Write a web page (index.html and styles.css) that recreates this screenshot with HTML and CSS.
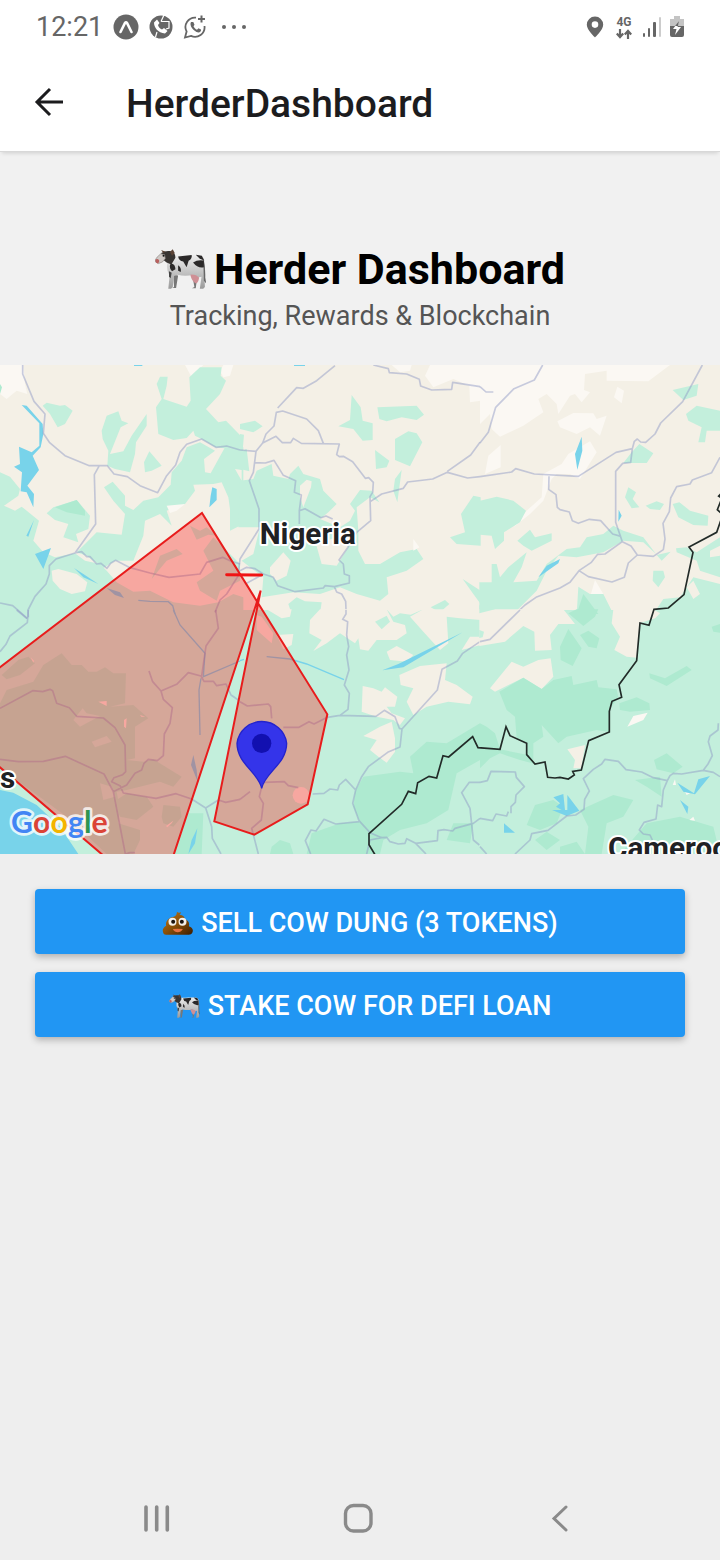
FILE: index.html
```html
<!DOCTYPE html>
<html lang="en">

<head>
    <meta charset="UTF-8" />
    <title>HerderDashboard</title>
    <meta name="viewport" content="width=device-width, initial-scale=1.0" />
    <link rel="stylesheet" href="styles.css">
</head>

<body>

    <!-- Shared icons -->
    <svg class="defs" width="0" height="0" aria-hidden="true">
        <defs>
            <linearGradient id="hide" x1="0" y1="0" x2="0" y2="1">
                <stop offset="0" stop-color="#eee" />
                <stop offset="1" stop-color="#9a9a9a" />
            </linearGradient>
            <linearGradient id="dungFill" x1="0" y1="0" x2="1" y2="1">
                <stop offset="0" stop-color="#b9781c" />
                <stop offset="0.5" stop-color="#8a5008" />
                <stop offset="1" stop-color="#3c1c00" />
            </linearGradient>
            <symbol id="cow" viewBox="0 0 150 118">
                <path d="M110 78 116 112 109 116 120 116 124 84zM54 76 56 112 51 115 62 115 68 78z" fill="#777" />
                <path d="M34 18C60 21 120 14 138 20Q150 28 145 66L147 112 142 117 132 117 137 82Q122 86 112 76 90 82 66 76L56 80 52 113 47 117 39 117 43 78Q32 60 36 40z" fill="url(#hide)" />
                <path d="M104 76Q118 72 130 84 128 98 121 102 108 96 104 76z" fill="#cf8f95" />
                <path d="M142 26Q149 50 148 84L151 102 144 94z" fill="#666" />
                <path d="M18 12Q30 4 44 6 60 8 60 26L48 46 34 40 22 30z" fill="#383432" />
                <path d="M17 14 28 17 30 28 22 38 10 43 1 38Q0 30 6 24z" fill="#cfc9c6" stroke="#8f8986" stroke-width="2" />
                <path d="M1 32Q6 26 12 33 14 39 8 43 1 42 1 32z" fill="#b8605e" />
                <path d="M24 12 18 3 31 8M44 9 52 1 58 12 50 20z" fill="#5b4336" />
                <circle cx="25" cy="20" r="3" fill="#111" />
                <path d="M68 22 108 18Q110 29 99 35L93 54 83 37Q70 35 68 22zM112 40Q126 30 144 34L144 54Q126 58 112 40zM46 42Q60 44 60 60L50 66Q40 56 46 42zM68 48Q78 54 76 68L68 64zM120 17 138 20 145 34 132 29z" fill="#2b2929" />
                <path d="M41 66 49 70 46 86 41 82z" fill="#444" />
            </symbol>
            <symbol id="dung" viewBox="0 0 92 72">
                <path d="M5 69Q-4 54 12 44 8 28 28 19 46 16 44 2 52 8 56 2 56 9 52 11 68 13 68 25 84 30 80 46 97 52 90 66 88 71 80 71L12 71Q7 71 5 69z" fill="url(#dungFill)" />
                <circle cx="31" cy="32" r="12" fill="#f4f0ea" />
                <circle cx="61" cy="32" r="12" fill="#f4f0ea" />
                <circle cx="33" cy="32" r="6" fill="#1a1410" />
                <circle cx="59" cy="32" r="6" fill="#1a1410" />
                <path d="M32 54Q46 52 62 54 56 64 47 64 37 64 32 54z" fill="#e5713f" />
            </symbol>
        </defs>
    </svg>

    <!-- Phone status bar -->
    <div class="status-bar">
        <div class="status-group">
            <span class="clock">12:21</span>
            <svg width="26" height="26" viewBox="0 0 26 26">
                <circle cx="13" cy="13" r="12.5" fill="#666" />
                <path d="M7.5 18 12 9q1-1.6 2 0l4.500 9" fill="none" stroke="#fff" stroke-width="2.600" stroke-linecap="round" />
            </svg>
            <svg width="24" height="26" viewBox="0 0 24 26">
                <circle cx="12" cy="13" r="11.500" fill="#666" />
                <path d="M5 8.500c0 5 4 10.500 11 11l2.500-2.500-3.500-3-2 1.500c-2-1-3.500-2.500-4-4.500l1.500-2L8 5.500z" fill="#fff" />
                <path d="M12 7.500h8v6.500l-3 1M15 1 12 7.500M8 18 6.500 23" fill="none" stroke="#fff" stroke-width="1.200" />
            </svg>
            <svg width="24" height="26" viewBox="0 0 24 26">
                <path d="M13 3.600A9.500 9.500 0 0 0 3.600 17.500L2 23.500l6-1.600A9.600 9.600 0 0 0 21.500 12" fill="none" stroke="#666" stroke-width="1.800" />
                <path d="M8 8c-2 3 2 9.500 7.500 10.500 1.500 0 3-1.500 2.500-3l-2.500-1.200-1.500 1.500c-1.500-.6-3-2-3.500-3.500l1-1.500L10.300 8z" fill="#666" />
                <path d="M18.500 1.500v7M15 5h7" stroke="#666" stroke-width="2" />
            </svg>
            <svg class="more-icon" width="26" height="26" viewBox="0 0 26 26" fill="#666">
                <circle cx="3" cy="13" r="2" />
                <circle cx="13" cy="13" r="2" />
                <circle cx="23" cy="13" r="2" />
            </svg>
        </div>
        <div class="status-group status-right">
            <svg width="20" height="24" viewBox="0 0 20 24">
                <path fill-rule="evenodd" d="M9 1.500a8.200 8.200 0 0 0-8.200 8.300C.8 15 9 22.500 9 22.500s8.200-7.500 8.200-12.700A8.200 8.200 0 0 0 9 1.500zm0 4.800a3.300 3.300 0 1 1 0 6.600 3.300 3.300 0 0 1 0-6.600z" fill="#666" />
            </svg>
            <div class="network">
                <span>4G</span>
                <svg width="16" height="10" viewBox="0 0 16 10" fill="none" stroke="#666" stroke-width="2.200">
                    <path d="M4 0v8M.8 4.500 4 8 7.200 4.500M12 10V2M8.800 5.500 12 2 15.200 5.500" />
                </svg>
            </div>
            <svg width="20" height="24" viewBox="0 0 20 24" fill="#666">
                <rect x="1" y="18" width="2" height="4" rx="1" />
                <rect x="6" y="13" width="2" height="9" rx="1" />
                <rect x="11" y="7" width="3" height="15" rx="1" />
                <rect x="17" y="2" width="2" height="20" rx="1" fill="#ccc" />
            </svg>
            <svg width="16" height="24" viewBox="0 0 16 24">
                <path d="M5 1h6v3h4v8H1V4h4z" fill="#c4c4c4" />
                <path d="M1 11h14v9q0 2-2 2H3q-2 0-2-2z" fill="#666" />
                <path d="M10 6 4 14h3.500L6 20l6-8H8.500z" fill="#fff" />
                <path d="M10 6 6 11h3z" fill="#666" />
            </svg>
        </div>
    </div>

    <header class="app-bar">
        <button class="back-btn" aria-label="Back">
            <svg width="30" height="30" viewBox="0 0 30 30" fill="none" stroke="#1c1c1e" stroke-width="3">
                <path d="M29 13H3M16 0 3 13l13 13" />
            </svg>
        </button>
        <div class="app-title">HerderDashboard</div>
    </header>

    <main>
        <div class="intro">
            <h1>
                <svg class="title-cow" role="img" aria-label="Cow"><use href="#cow" /></svg>
                Herder Dashboard
            </h1>
            <p>Tracking, Rewards &amp; Blockchain</p>
        </div>

        <svg class="map" viewBox="0 3 2160 1467" preserveAspectRatio="xMidYMid slice" role="img" aria-label="Map of Nigeria">
            <rect class="land" width="2160" height="740" />
            <rect class="green" y="738" width="2160" height="740" />

            <!-- north west -->
            <g>
                <path class="sand" d="M0 3 70 3 75 60 82 90 50 80 20 105 0 90zM555 3 610 3 575 40zM670 3 700 3 690 35 670 40 660 20z" />
                <path class="green" d="M0 325 30 338 60 375 55 395 12 425 45 440 65 428 117 470 100 530 130 565 165 580 225 568 255 590 300 600 320 620 350 655 400 683 450 680 520 715 600 725 655 715 700 690 730 700 730 750 0 750z" />
                <path class="green" d="M312 370 338 353 375 395 375 425 400 438 430 410 475 400 512 362 515 325 545 290 560 250 600 235 645 260 612 285 615 325 632 328 675 250 730 250 730 480 690 500 690 435 685 400 665 355 640 360 580 362 585 380 555 420 500 440 515 485 480 450 435 470 430 515 400 590 345 590 310 612 260 575 230 565 270 525 290 505 365 512 375 450 340 410z" />
                <path class="green" d="M470 60 480 38 503 38 500 65 490 105 560 128 572 110 568 40 600 10 665 10 662 35 678 50 660 90 618 135 655 175 678 170 722 215 722 258 645 250 605 225 585 215 580 200 560 222 520 228 475 210 468 130 485 105z" />
                <path class="green" d="M128 125 140 116 180 125 195 123 218 140 195 180 173 190 150 150zM305 200 320 155 355 142 365 170 385 178 362 190 330 270 370 262 395 215 440 150 440 185 408 235 405 270 390 325 345 315 322 305 325 260 308 225zM432 295 448 262 485 305 455 320 435 325zM140 448 160 430 230 408 270 455 265 495 228 510 235 535 190 520 205 480 165 468z" />
                <path class="green" d="M570 485 600 500 620 490 650 515 625 512 590 527zM455 645 480 575 530 555 548 570 500 590 475 620zM610 560 640 520 720 600 720 650 660 680 650 710 600 680 590 655 640 620z" />
                <path class="forest" d="M165 430 230 408 255 440 255 455 200 445zM0 60 6 70 0 90z" />
                <path class="land" d="M155 620 175 615 230 630 262 655 255 682 215 690 180 675 158 650zM705 315 725 318 725 350z" />
                <path class="sand" d="M500 425 555 420 530 440 510 447z" />
                <path class="water" d="M65 123 80 125 128 180 130 210 122 250 98 275 117 318 82 365 102 390 100 430 80 385 62 382 66 325 42 308 60 300 57 248 95 265 118 245 118 178zM102 468 85 518 79 515zM105 570 153 552 130 615zM222 612 250 630 295 660 250 640zM632 395 637 370 650 375 650 408 628 430zM320 672 360 685 372 702 345 693zM402 3 427 3 427 6 402 6z" />
                <path class="river" d="M415 709 450 712 505 713 518 725 525 750" />
                <path class="road" d="M68 3 68 30 102 112 135 150 130 208 148 235 195 275 268 305 322 305 342 330 382 338 420 365 473 386 500 335 527 303 540 265 560 241 605 225 648 250 680 246 720 258M298 305 283 332 287 480 225 567 168 585 148 605 148 630 138 660 105 697 84 738 85 760M225 567 245 563 260 578 270 578 290 600 303 598 321 613 332 598 347 589 390 611 450 627 507 640 600 630 620 595 668 580 690 590 720 600M0 717 38 725 82 763M715 635 680 690 660 708 645 745" />
            </g>

            <!-- north centre -->
            <g transform="translate(720 0)">
                <path class="sand" d="M570 3 722 3 722 110 690 115 688 65 640 45 580 70 555 35zM455 3 515 3 510 20 480 25z" />
                <path class="green" d="M0 180 45 170 68 187 40 205 0 195zM335 93 362 130 368 170 398 178 398 228 368 230 340 195 295 187 330 168zM412 130 530 125 552 152 530 168 485 160 440 172 418 165zM465 225 505 202 530 208 547 235 510 307 465 288zM405 258 448 290 440 310 408 315zM0 210 12 212 8 260 20 255 28 322 0 315zM465 345 485 318 472 415 460 380z" />
                <path class="green" d="M0 350 40 345 50 320 95 300 100 335 145 345 150 330 175 305 190 330 240 345 250 380 290 420 265 445 240 465 300 490 330 470 345 440 330 420 360 378 395 380 418 415 390 400 350 430 355 500 355 560 375 600 420 600 480 565 530 555 550 585 500 620 440 640 445 690 420 710 350 690 300 670 240 690 160 685 65 700 70 640 5 590 40 570 60 490 -5 490z" />
                <path class="green" d="M145 720 170 700 195 712 245 715 240 750 155 750zM668 645 722 680 722 720 700 690 675 655zM572 730 615 708 628 720 600 745zM630 520 675 505 663 450 700 395 722 400 722 545 650 540z" />
                <path class="land" d="M180 365 200 347 215 352 213 370 190 430 180 400zM90 610 130 565 152 590 140 635 110 650 90 630zM228 540 290 520 325 550 290 605 245 600z" />
                <path class="sand" d="M520 525 538 550 520 560z" />
                <path class="water" d="M162 3h33v3h-33z" />
                <path class="road" d="M285 5 230 50 190 73 170 71 113 132M400 3 445 14 448 26 500 30 538 46 542 66 575 78 635 76 638 55 720 68M68 237 78 210 102 186 109 145 128 141 200 165 235 200 250 238M0 258 48 262 68 237 108 217 127 236 152 236 160 223 184 238 298 240 290 272 298 278 310 277 338 293 376 343 386 341 400 355 398 385 390 398 392 470 350 505 325 548 297 588 310 600 313 630 328 635 328 657 283 668 255 665 250 672 165 683 113 665 100 640 70 630 45 614 20 610 0 620M48 262 40 325 28 350 57 435 57 495 0 585 -5 630M42 296 76 297 102 289 130 334 167 350 163 385 184 393 178 440 178 480M178 440 195 434 243 461 258 456 278 465M392 412 425 390 490 373 503 354 578 345 622 325 683 342 720 338M622 322 692 273 720 235M283 668 290 684 305 690 317 712 318 738M70 630 20 658" />
            </g>

            <!-- north east -->
            <g transform="translate(1440 0)">
                <path class="sand" d="M0 3 570 3 505 52 380 50 380 20 315 30 312 78 330 85 305 115 285 90 270 95 235 150 230 120 200 90 175 105 190 145 130 185 60 218 35 195 30 150 0 180zM232 172 280 147 340 148 350 165 380 155 360 215 330 190 290 210 240 190zM402 100 412 68 432 80 425 118zM15 330 25 275 62 243 62 310zM190 330 245 300 265 270 330 232 350 265 300 345 270 330 230 330 215 345 190 410 150 450 100 490 140 440 185 400zM330 700 345 648 370 690z" />
                <path class="green" d="M578 78 655 60 650 95 610 108zM618 150 650 125 720 140 720 200 680 200 675 235 655 235 665 190 625 170zM455 265 478 240 520 268 500 297 430 297zM435 400 445 370 468 385 458 405 478 430 455 433zM497 425 530 412 552 420 540 438 510 435zM578 420 598 415 630 440 685 455 683 485 640 483 595 460z" />
                <path class="green" d="M0 410 50 398 100 410 138 440 120 475 72 505 72 530 45 555 35 515 0 512zM112 530 150 497 165 520 215 508 215 530 155 560 130 545zM-2 655 35 655 35 600 50 600 60 640 85 610 140 565 125 610 100 655 170 650 200 600 260 555 300 550 320 520 370 510 400 485 430 500 490 520 528 570 490 535 430 530 370 565 290 580 235 575 200 620 170 680 130 720 100 750 -2 750zM530 573 572 563 545 590zM520 620 550 620 555 640 535 670 518 650zM588 553 620 550 650 565 720 520 720 640 660 620 650 590 590 565zM290 750 295 668 330 690 370 690 400 750zM550 705 600 700 640 640 720 660 720 750 520 750z" />
                <path class="forest" d="M290 750 310 690 355 750z" />
                <path class="land" d="M620 670 640 650 660 690 640 705zM690 560 720 545 720 575 690 580z" />
                <path class="water" d="M305 218 307 260 292 317 285 270zM415 473 416 437 425 455zM175 640 200 605 240 585 235 598z" />
                <path class="road" d="M188 3 163 48 102 74 47 130 25 205 0 237M0 68 18 84 40 84M0 338 95 324 107 314 163 330 295 337 408 265 457 254M667 3 608 113 542 177 525 210 497 235 482 234 472 225 463 232 457 254 452 295 428 298 407 322 407 475 427 533 375 570 353 571 333 596 297 620 270 655 240 672 168 700 135 723 119 738M207 337 206 376 228 392 232 430 240 437 268 444 277 470 295 478 328 466 362 470 398 510 423 517M427 533 453 546 472 573 520 577 550 557 555 525 549 478 568 443 572 402 590 368 630 360 637 348 695 326 720 280M472 573 445 597 433 640 396 654 325 638 297 620" />
            </g>

            <!-- south west -->
            <g transform="translate(0 738)">
                <path class="forest" d="M0 280 20 240 100 215 130 165 185 130 215 165 245 165 265 185 290 185 315 172 340 190 378 190 375 280 330 290 400 285 445 325 405 350 405 445 380 450 430 455 460 448 545 500 520 530 480 515 380 540 350 545 360 600 355 640 420 660 420 690 400 732 320 732 200 620 50 510 0 480zM5 195 55 150 85 140 105 160 60 195 20 208zM485 620 490 585 540 590 545 620 520 650 490 640zM350 570 380 550 440 560 460 590 410 630 360 620zM520 732 560 610 610 610 605 732z" />
                <path class="green" d="M220 330 248 295 260 310 300 318 240 350zM275 395 320 378 335 395 285 412zM300 520 335 530 345 560 310 570z" />
                <path class="land" d="M295 275 320 273 320 288zM372 330 380 325 378 355 372 350zM92 142 102 152 100 158zM420 315 436 320 424 320zM498 648 520 632 515 640 502 652z" />
                <path class="water" d="M0 540 40 548 110 585 180 650 235 732 0 732zM565 732 575 690 592 655 585 700zM580 435 590 480 593 515 573 465z" />
                <path class="river" d="M520 0 540 45 615 130 610 200 720 153M603 205 597 240 600 375" />
                <path class="road" d="M0 295 98 242 128 245 150 238 158 242 170 280 208 293 230 319 310 324 345 353 375 405 377 485 368 494 342 503 335 515 360 527 370 549 468 565 528 551 575 567 617 594 655 570 677 577 720 568M0 448 55 455 130 454 196 439 312 492 340 545 376 732M340 545 380 525 405 490 425 480 432 460 445 448 472 452 490 437 493 372 510 340 517 293 490 268 483 243 458 215 447 183M483 243 530 223 565 188 603 198 612 214 640 214 650 227 678 222 693 255 715 270M647 0 655 55 618 108 605 198M617 594 635 650 637 685 663 732M0 125 18 103 30 78 82 38 85 0M50 0 80 25M376 732 390 728 405 728" />
            </g>

            <!-- south centre -->
            <g transform="translate(720 738)">
                <path class="land" d="M240 -2 210 30 208 70 245 90 220 123 260 100 300 70 345 100 355 85 360 118 385 122 410 90 470 90 500 70 495 45 460 35 440 -2zM510 20 550 -2 722 -2 722 30 660 25 620 20 625 100 600 120 550 65zM440 125 470 108 520 135 500 155 450 150zM478 195 540 168 620 160 615 210 650 225 698 260 690 283 625 275 560 290 520 315 500 275 520 235 482 225zM368 228 400 235 425 245 435 232 472 260 465 290 440 290 455 310 495 325 480 345 460 330 410 320 365 305zM370 378 420 350 455 335 465 385 465 425 440 458 415 440 390 420 410 390zM665 120 690 80 722 80 722 105zM110 75 160 72 155 105 130 118zM50 15 65 20 100 70 95 100 50 60zM80 -2 155 -2 150 20 125 25 100 10zM440 -2 550 -2 512 14 480 10 460 20z" />
                <circle class="land" cx="183" cy="556" r="25" />
                <path class="green" d="M405 35 440 17 450 35 425 58z" />
                <path class="forest" d="M345 545 370 500 480 485 520 490 510 440 560 395 620 400 720 340 720 450 650 490 625 600 560 640 480 660 430 690 420 732 200 732 215 670 300 640 360 635 340 590zM640 640 700 640 690 700 620 690zM95 710 120 690 150 700 160 732 90 732z" />
                <path class="green" d="M500 732 560 700 620 732z" />
                <path class="water" d="M427 181 475 162 668 67 490 172z" />
                <path class="river" d="M0 152 12 148M80 140 150 147 200 162 312 209" />
                <path class="road" d="M318 0 318 12 308 28 323 35 320 75 326 110 320 135 327 180 313 225 328 250 324 298 300 316 262 322 222 342 207 335 177 352 130 352M300 316 408 319 433 301 465 320 478 355 486 357 592 240 606 178 652 153 668 130 720 95M486 357 480 411 443 427 385 470 365 500 347 540 338 580 357 632 390 668 425 683M0 275 22 288 85 282 92 290 95 325M218 552 252 550 270 537 293 540 298 525 317 508 347 540M357 635 287 642 252 628 228 663 213 660 196 692 212 732M390 690 425 683 440 682 450 695 475 702 495 700 500 686 527 700 592 692 594 662 612 659 638 663 645 655 700 640 720 625M527 700 558 732M70 517 133 515 145 527 175 533M65 530 58 560 70 580 64 630 35 655 55 732M380 732 390 690M720 517 688 517 665 548 690 595 700 690 718 705M0 568 30 545" />
            </g>

            <!-- south east -->
            <g transform="translate(1440 738)">
                <path class="land" d="M-2 -2 250 -2 285 42 235 42 210 75 215 120 165 122 163 65 130 48 75 95 -2 108zM30 235 95 155 130 170 175 150 212 145 220 200 185 237 130 203 45 245zM400 -2 520 -2 540 10 525 25 480 39 470 143 440 140 403 120 420 80 395 40zM262 418 315 405 304 475 280 475 285 450z" />
                <path class="forest" d="M58 245 130 203 185 237 220 210 275 198 280 225 350 210 355 232 410 238 415 262 388 300 388 366 350 360 260 380 235 400 185 345 190 380 160 400 160 450 140 434 140 400 110 385 105 320 80 300zM240 110 265 57 305 115 278 168 242 150zM265 10 290 -2 355 -2 345 20 310 48zM300 75 325 62 358 85 350 115 325 110zM508 190 555 205 620 168 635 180 560 228 510 205zM418 280 470 262 508 280 510 300 450 305 420 300zM522 450 560 430 608 470 580 490 530 478zM315 732 325 650 300 600 400 555 460 570 430 620 380 640 365 732zM0 340 20 350 45 370 60 418 140 434 165 462 120 450 60 430 30 445 0 475zM165 585 220 570 250 590 230 640 180 660 140 645zM465 510 540 500 545 560 500 530zM500 640 600 620 700 650 720 732 420 732zM240 710 290 695 315 732 240 732zM165 690 200 665 240 690 200 720zM695 50 720 42 720 68 700 65z" />
                <path class="green" d="M-2 60 12 65 8 82 -2 84zM-2 -14 20 -14 45 -2 -2 10z" />
                <path class="sand" d="M442 350 460 318 503 308 490 330zM578 525 585 508 588 525zM615 545 630 550 620 555zM628 630 640 620 645 632z" />
                <path class="water" d="M216 600 245 600 228 590 240 580 220 562 250 552 255 600 262 600 262 555 298 602 260 618zM72 640 105 668 72 668zM592 518 642 550 655 508 690 498 645 553 610 545zM600 570 625 590 622 612z" />
                <path class="road" d="M120 0 30 88 0 95M0 517 22 512 33 484 106 486 109 502 133 530 108 555 106 577 93 590 93 610M0 625 38 632 48 612 80 618 85 605M105 732 150 690 155 671 204 661 260 618 287 615 312 598 314 568 328 543 310 506 340 478 365 462 375 448 415 454 438 479 485 486 520 503 562 512 550 540 545 590 533 585 528 627 492 637 478 660 490 672 510 675 517 690M562 512 570 497 580 490 605 492 670 481 700 487 720 500M670 481 684 462 697 437 685 395 690 378 714 360 715 340M0 710 20 732" />
            </g>

            <!-- country border -->
            <path class="border" d="M1125 1472 1107 1442 1107 1409 1205 1321 1225 1282 1247 1289 1253 1256 1287 1237 1310 1242 1329 1175 1346 1179 1418 1118 1434 1151 1500 1156 1518 1088 1530 1115 1580 1138 1580 1172 1605 1200 1635 1194 1643 1240 1665 1242 1680 1240 1705 1245 1723 1233 1718 1222 1744 1218 1766 1130 1828 1104 1828 1042 1836 1012 1865 1000 1857 962 1910 890 1920 777 1947 784 1962 736 2005 732 2052 692 2079 565 2067 549 2150 505 2162 470M2162 446 2152 437 2162 412M2165 402 2156 396 2162 390" />

            <!-- grazing fence -->
            <path class="fence" d="M606 447 982 1051 923 1321 763 1412 643 1372 782 680 502 1530 375 1530 -20 1193 -20 925z" />
            <path class="track" d="M680 632 785 633" />

            <text class="place" x="779" y="540">Nigeria</text>
            <text class="place" x="1824" y="1482">Cameroon</text>
            <text class="place" x="0" y="1273">s</text>

            <!-- cow position -->
            <path class="pin" d="M785 1273C775 1225 711 1200 711 1138a75 74 0 0 1 149 0C860 1200 795 1225 785 1273z" />
            <circle class="pin-dot" cx="785" cy="1138" r="29" />

            <text class="google" x="33" y="1407"><tspan fill="#4285f4">G</tspan><tspan fill="#db4437">o</tspan><tspan fill="#f4b400">o</tspan><tspan fill="#4285f4">g</tspan><tspan fill="#2f9550">l</tspan><tspan fill="#db4437">e</tspan></text>
        </svg>

        <div class="actions">
            <button class="action-btn">
                <svg class="dung-icon" role="img" aria-label="Dung"><use href="#dung" /></svg>
                SELL COW DUNG (3 TOKENS)
            </button>
            <button class="action-btn">
                <svg class="cow-icon" role="img" aria-label="Cow"><use href="#cow" /></svg>
                STAKE COW FOR DEFI LOAN
            </button>
        </div>
    </main>

    <!-- Phone navigation -->
    <nav class="nav-bar">
        <button aria-label="Recent apps">
            <svg width="32" height="32" viewBox="0 0 32 32" fill="none" stroke="#8a8a8a" stroke-width="3.600" stroke-linecap="round">
                <path d="M5 5v23M15.700 5v23M26.300 5v23" />
            </svg>
        </button>
        <button aria-label="Home">
            <svg width="32" height="32" viewBox="0 0 32 32" fill="none" stroke="#8a8a8a" stroke-width="3.400">
                <rect x="3.500" y="3.500" width="25.500" height="25.500" rx="8" />
            </svg>
        </button>
        <button aria-label="Back">
            <svg width="32" height="32" viewBox="0 0 32 32" fill="none" stroke="#8a8a8a" stroke-width="3" stroke-linecap="round">
                <path d="M23 5 11 16.500 23 28" />
            </svg>
        </button>
    </nav>

</body>

</html>
```
FILE: styles.css
```css
* {
    box-sizing: border-box;
}

body {
    margin: 0;
    min-height: 100vh;
    display: flex;
    flex-direction: column;
    font-family: Roboto, sans-serif;
    background: #eee;
    color: #000;
}

svg {
    display: block;
}

.defs {
    position: absolute;
}

button {
    font-family: inherit;
    border: none;
    cursor: pointer;
}

.status-bar {
    display: flex;
    justify-content: space-between;
    align-items: center;
    height: 54px;
    padding: 0 35px 0 36px;
    background: #fff;
    color: #666;
}

.status-group {
    display: flex;
    align-items: center;
    gap: 10px;
}

.clock {
    font-size: 27px;
    line-height: 32px;
}

.more-icon {
    margin-left: 4px;
}

.status-right {
    gap: 7px;
}

.network {
    display: flex;
    flex-direction: column;
    align-items: center;
    width: 22px;
    font-size: 12px;
    line-height: 13px;
    font-weight: 700;
}

.app-bar {
    position: relative;
    display: flex;
    align-items: center;
    height: 98px;
    padding: 3px 34px 0;
    background: #fff;
    border-bottom: 1px solid #d8d8d8;
    box-shadow: 0 3px 4px -2px rgba(0, 0, 0, 0.15);
}

.back-btn {
    padding: 0;
    background: none;
}

.back-btn svg {
    overflow: visible;
}

.app-title {
    margin-left: 62px;
    font-size: 39px;
    line-height: 48px;
    font-weight: 500;
    color: #1c1c1e;
}

.intro {
    padding: 91px 16px 33px;
    background: #f1f1f1;
    text-align: center;
}

.intro h1 {
    display: flex;
    justify-content: center;
    align-items: center;
    gap: 8px;
    margin: 0;
    font-size: 43px;
    line-height: 52px;
    font-weight: 700;
}

.title-cow {
    width: 51px;
    height: 40px;
}

.intro p {
    margin: 5px 0 0;
    font-size: 27px;
    line-height: 32px;
    color: #555;
}

.map {
    width: 100%;
    height: auto;
}

.land {
    fill: #f4f0e6;
}

.sand {
    fill: #fbf8f3;
}

.green {
    fill: #c3efdc;
}

.forest {
    fill: #aeead0;
}

.water {
    fill: #78d3ea;
}

.river {
    fill: none;
    stroke: #78d3ea;
    stroke-width: 4;
}

.road {
    fill: none;
    stroke: #8e98c4;
    stroke-opacity: 0.48;
    stroke-width: 5;
    stroke-linejoin: round;
}

.border {
    fill: none;
    stroke: #222b28;
    stroke-width: 5;
}

.fence {
    fill: rgba(255, 0, 0, 0.3);
    stroke: #e81c1c;
    stroke-width: 6;
}

.track {
    stroke: #f01414;
    stroke-width: 9;
    stroke-linecap: round;
}

.place {
    font-size: 89px;
    font-weight: 700;
    fill: #202124;
    stroke: #fff;
    stroke-width: 12;
    stroke-linejoin: round;
    paint-order: stroke;
}

.pin {
    fill: #3434ea;
    stroke: #2424cc;
    stroke-width: 4;
}

.pin-dot {
    fill: #1210b0;
}

.google {
    font-family: Lato, sans-serif;
    font-size: 91px;
    font-weight: 700;
    stroke: rgba(255, 255, 255, 0.8);
    stroke-width: 16;
    stroke-linejoin: round;
    paint-order: stroke;
}

.actions {
    display: flex;
    flex-direction: column;
    gap: 18px;
    padding: 35px;
}

.action-btn {
    display: flex;
    justify-content: center;
    align-items: center;
    gap: 8px;
    height: 65px;
    padding: 2px 16px 0;
    border-radius: 4px;
    background: #2196f3;
    color: #fff;
    font-size: 27px;
    font-weight: 500;
    box-shadow: 0 3px 7px rgba(0, 0, 0, 0.26);
}

.dung-icon,
.cow-icon {
    width: 31px;
    height: 24px;
}

.nav-bar {
    display: flex;
    justify-content: space-around;
    align-items: center;
    height: 84px;
    margin-top: auto;
    padding: 0 60px 0 56px;
}

.nav-bar button {
    padding: 0;
    background: none;
}
```
